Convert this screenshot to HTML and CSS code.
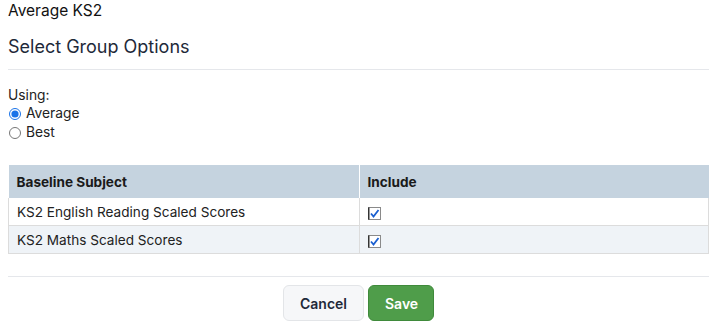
FILE: index.html
```html
<!DOCTYPE html>
<html>
<head>
<meta charset="utf-8">
<link rel="stylesheet" href="styles.css">
</head>
<body>
<div class="page">
  <div class="title">Average KS2</div>
  <h2 class="section">Select Group Options</h2>
  <div class="options">
    <div class="label">Using:</div>
    <label class="radio"><input type="radio" name="using" checked> Average</label>
    <label class="radio"><input type="radio" name="using"> Best</label>
  </div>
  <table class="grid">
    <thead>
      <tr><th class="c1">Baseline Subject</th><th>Include</th></tr>
    </thead>
    <tbody>
      <tr><td>KS2 English Reading Scaled Scores</td><td><span class="chk"><svg viewBox="0 0 13 13" width="13" height="13"><rect x="0.5" y="0.5" width="12" height="12" fill="#fff" stroke="#8a8a8a"/><path d="M0.5 0.5V12.5" stroke="#333" stroke-width="2"/><path d="M3 6.5L5.5 9.5L10.5 3" fill="none" stroke="#1a5fd0" stroke-width="1.8"/></svg></span></td></tr>
      <tr class="alt"><td>KS2 Maths Scaled Scores</td><td><span class="chk"><svg viewBox="0 0 13 13" width="13" height="13"><rect x="0.5" y="0.5" width="12" height="12" fill="#fff" stroke="#8a8a8a"/><path d="M0.5 0.5V12.5" stroke="#333" stroke-width="2"/><path d="M3 6.5L5.5 9.5L10.5 3" fill="none" stroke="#1a5fd0" stroke-width="1.8"/></svg></span></td></tr>
    </tbody>
  </table>
  <div class="footer">
    <button class="btn cancel">Cancel</button>
    <button class="btn save">Save</button>
  </div>
</div>
</body>
</html>
```
FILE: styles.css
```css
html, body { margin: 0; padding: 0; background: #fff; }
body { font-family: Inter, "Liberation Sans", sans-serif; color: #1e2939; }
.page { padding: 0 9px 0 8px; }
.title { font-size: 15.5px; line-height: 20px; padding-top: 1px; color: #111; }
.section { font-size: 18px; font-weight: 400; margin: 0; padding: 15px 0 11px; line-height: 22px; border-bottom: 1px solid #e5e7eb; color: #1e2939; }
.options { padding-top: 16px; font-size: 13.8px; color: #222; }
.label { line-height: 18px; }
.radio { display: flex; align-items: center; line-height: 19px; height: 19px; }
.radio input { margin: 0 5px 0 1px; width: 12px; height: 12px; accent-color: #1a73e8; }
.grid { width: 100%; border-collapse: collapse; margin-top: 23px; font-size: 13.6px; color: #222; }
.grid th { background: #c5d3df; text-align: left; font-weight: 700; height: 33px; padding: 0 8px; border-right: 1px solid #fff; color: #1a1a1a; }
.grid th:last-child { border-right: none; }
.grid th.c1 { width: 334px; }
.grid td { height: 27px; padding: 0 8px; border: 1px solid #dcdcdc; border-top: none; }
.grid tr.alt td { background: #eff3f7; }
.chk { display: inline-block; vertical-align: middle; height: 13px; margin-top: 3px; }
.chk svg { display: block; }
.footer { margin-top: 22px; border-top: 1px solid #e5e7eb; display: flex; justify-content: center; gap: 4px; padding-top: 8px; }
.btn { font-family: Inter, "Liberation Sans", sans-serif; font-size: 14px; font-weight: 600; height: 36px; border-radius: 6px; padding: 0 16px; cursor: pointer; }
.cancel { background: #f6f7f9; border: 1px solid #e3e5e8; color: #1e2939; width: 81px; }
.save { background: #4f9d4a; border: 1px solid #3f8a3b; color: #fff; width: 66px; }
```
